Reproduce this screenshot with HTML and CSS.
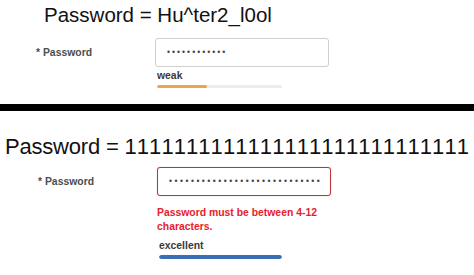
FILE: index.html
```html
<!DOCTYPE html>
<html>
<head>
<meta charset="utf-8">
<link rel="stylesheet" href="styles.css">
</head>
<body>
<section class="case case-one">
  <h1 class="title title-one">Password = Hu^ter2_l0ol</h1>
  <div class="row">
    <label class="label">* Password</label>
    <div class="field">
      <div class="input"><span class="dots">••••••••••••</span></div>
      <div class="strength">
        <div class="strength-text">weak</div>
        <div class="track"><div class="fill fill-weak" style="width:50px"></div></div>
      </div>
    </div>
  </div>
</section>
<div class="divider"></div>
<section class="case case-two">
  <h1 class="title title-two">Password = <span class="ones"><span>1111</span><span>1111</span><span>1111</span><span>1111</span><span>1111</span><span>1111</span><span>1111</span></span></h1>
  <div class="row">
    <label class="label">* Password</label>
    <div class="field">
      <div class="input input-error"><span class="dots dots-long">••••••••••••••••••••••••••••</span></div>
      <div class="error">Password must be between 4-12 characters.</div>
      <div class="strength">
        <div class="strength-text">excellent</div>
        <div class="track"><div class="fill fill-excellent" style="width:123px"></div></div>
      </div>
    </div>
  </div>
</section>
</body>
</html>
```
FILE: styles.css
```css
html, body {
  margin: 0;
  padding: 0;
  background: #ffffff;
}
body {
  width: 474px;
  height: 275px;
  overflow: hidden;
  font-family: "Liberation Sans", Arial, sans-serif;
  color: #000;
}
.title {
  margin: 0;
  font-weight: normal;
  color: #111;
  white-space: nowrap;
}
.title-one {
  margin-top: 3px;
  padding-left: 44px;
  font-size: 20.5px;
  line-height: 24px;
}
.title-two {
  margin-top: 23px;
  padding-left: 5px;
  font-size: 22px;
  letter-spacing: -0.2px;
  line-height: 26px;
}
.ones {
  letter-spacing: 1.7px;
}
.row {
  display: grid;
  align-items: start;
}
.case-one .row {
  margin-top: 11px;
  grid-template-columns: 155px 174px;
}
.case-two .row {
  margin-top: 7px;
  grid-template-columns: 157px 174px;
}
.label {
  height: 29px;
  display: flex;
  align-items: center;
  font-size: 10.4px;
  font-weight: bold;
  color: #4d4d4d;
}
.case-one .label { padding-left: 36px; }
.case-two .label { padding-left: 38px; }
.field {
  display: flex;
  flex-direction: column;
}
.input {
  box-sizing: border-box;
  height: 29px;
  border: 1px solid #cfcfcf;
  border-radius: 3px;
  display: flex;
  align-items: center;
  padding-left: 11px;
  background: #fff;
}
.input-error {
  border-color: #b8363a;
  box-shadow: 0 0 1px rgba(200, 60, 60, 0.5);
}
.dots {
  font-size: 8.5px;
  letter-spacing: 2.05px;
  color: #444;
  line-height: 1;
}
.dots-long {
  letter-spacing: 2.5px;
}
.error {
  margin-top: 10px;
  font-size: 10.4px;
  font-weight: bold;
  line-height: 14px;
  color: #e8212b;
}
.strength {
  padding-left: 2px;
  display: flex;
  flex-direction: column;
}
.case-one .strength { margin-top: 3px; }
.case-two .strength { margin-top: 6px; }
.strength-text {
  font-size: 10.4px;
  font-weight: bold;
  line-height: 12px;
  color: #3a3a3a;
}
.track {
  margin-top: 3px;
  width: 125px;
  height: 3px;
  background: #ececec;
  border-radius: 2px;
  overflow: hidden;
}
.case-two .track {
  width: 123px;
  margin-top: 3px;
  height: 3.5px;
}
.fill {
  height: 100%;
  border-radius: 2px;
}
.fill-weak { background: #e9a64c; }
.fill-excellent { background: #3b6fb3; }
.divider {
  margin-top: 16px;
  height: 7px;
  background: #000;
}
```
